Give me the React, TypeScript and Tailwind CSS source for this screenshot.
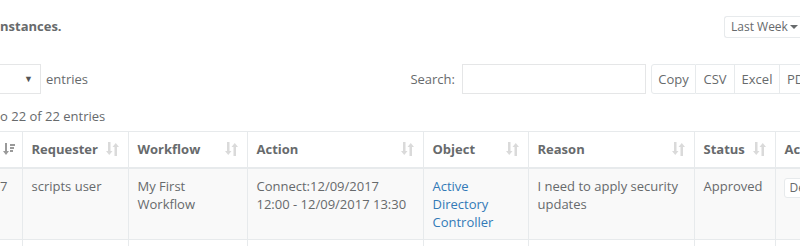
import React from "react";

/** Two thin arrows, used by every column that can be sorted */
function SortIcon({ active = false }: { active?: boolean }) {
  if (active) {
    return (
      <svg width="12" height="13" viewBox="0 0 12 13" className="shrink-0">
        <g fill="#9a9a9a">
          <rect x="2" y="0" width="2" height="9" />
          <polygon points="0,8 6,8 3,12" />
          <rect x="7" y="1" width="5" height="2" />
          <rect x="7" y="4" width="4" height="2" />
          <rect x="7" y="7" width="3" height="2" />
        </g>
      </svg>
    );
  }
  return (
    <svg width="13" height="14" viewBox="0 0 13 14" className="shrink-0">
      <g fill="#dadada">
        <rect x="2" y="0" width="2.5" height="10" />
        <polygon points="0,9 6.5,9 3.25,13" />
        <rect x="8.5" y="4" width="2.5" height="10" />
        <polygon points="6.5,5 13,5 9.75,1" />
      </g>
    </svg>
  );
}

interface Column {
  label: string;
  width: string;
  sortable: boolean;
  active?: boolean;
}

const COLUMNS: Column[] = [
  { label: "", width: "w-[22px]", sortable: true, active: true },
  { label: "Requester", width: "w-[106px]", sortable: true },
  { label: "Workflow", width: "w-[119px]", sortable: true },
  { label: "Action", width: "w-[176px]", sortable: true },
  { label: "Object", width: "w-[105px]", sortable: true },
  { label: "Reason", width: "w-[166px]", sortable: true },
  { label: "Status", width: "w-[81px]", sortable: true },
  { label: "Ac", width: "w-[80px]", sortable: false },
];

export default function App() {
  return (
    <div className="w-[800px] h-[246px] overflow-hidden bg-white font-['Open_Sans',sans-serif] text-[13px] leading-[18px] text-[#676a6c]">
      {/* title + range picker */}
      <div className="flex justify-between items-start pt-[16px] h-[38px]">
        <div className="mt-[1px] font-bold">nstances.</div>
        <div className="flex items-center h-[22px] w-[90px] pl-[6px] border border-[#e7eaec] border-r-0 rounded-l-[3px] text-[12px] text-[#676a6c] -mr-[14px]">
          Last Week
          <span className="ml-[2px] inline-block w-0 h-0 border-l-[4px] border-r-[4px] border-t-[4px] border-l-transparent border-r-transparent border-t-[#676a6c]" />
        </div>
      </div>

      {/* length / search / export */}
      <div className="flex items-center mt-[26px] h-[30px]">
        <div className="flex items-center justify-end h-[30px] w-[41px] border border-l-0 border-[#e5e6e7] pr-[7px]">
          <span className="text-[9px] text-[#555]">▼</span>
        </div>
        <span className="ml-[5px]">entries</span>
        <div className="flex-1" />
        <span>Search:</span>
        <div className="ml-[7px] h-[30px] w-[184px] border border-[#e5e6e7]" />
        <div className="ml-[5px] flex h-[30px] -mr-[40px]">
          <div className="w-[45px] flex items-center justify-center border border-[#e7eaec] rounded-l-[3px]">Copy</div>
          <div className="w-[39px] flex items-center justify-center border border-l-0 border-[#e7eaec]">CSV</div>
          <div className="w-[45px] flex items-center justify-center border border-l-0 border-[#e7eaec]">Excel</div>
          <div className="w-[60px] flex items-center pl-[7px] border border-l-0 border-[#e7eaec]">PDF</div>
        </div>
      </div>

      <div className="mt-[13px]">o 22 of 22 entries</div>

      {/* requests table */}
      <table className="mt-[6px] table-fixed border-collapse w-[855px]">
        <thead>
          <tr>
            {COLUMNS.map((col, i) => (
              <th
                key={i}
                className={`${col.width} h-[36px] border-t border-r border-b-2 border-[#e7eaec] px-[9px] text-left font-bold align-middle ${i === 0 ? "pl-[3px]" : ""}`}
              >
                <div className="flex items-center justify-between">
                  <span>{col.label}</span>
                  {col.sortable && <SortIcon active={col.active} />}
                </div>
              </th>
            ))}
          </tr>
        </thead>
        <tbody>
          <tr className="bg-[#f9f9f9] align-top">
            <td className="border-r border-b border-[#e7eaec] h-[71px] py-[8px] pr-[8px]">7</td>
            <td className="border-r border-b border-[#e7eaec] py-[8px] px-[9px]">scripts user</td>
            <td className="border-r border-b border-[#e7eaec] py-[8px] px-[9px]">My First Workflow</td>
            <td className="border-r border-b border-[#e7eaec] py-[8px] px-[9px]">
              Connect:12/09/2017 12:00 - 12/09/2017 13:30
            </td>
            <td className="border-r border-b border-[#e7eaec] py-[8px] px-[9px]">
              <span className="text-[#337ab7]">Active Directory Controller</span>
            </td>
            <td className="border-r border-b border-[#e7eaec] py-[8px] px-[9px]">I need to apply security updates</td>
            <td className="border-r border-b border-[#e7eaec] py-[8px] px-[9px]">Approved</td>
            <td className="border-b border-[#e7eaec] py-[8px] px-[8px]">
              <span className="inline-block mt-[1px] px-[5px] h-[20px] leading-[18px] text-[12px] bg-white border border-[#e7eaec] rounded-[3px]">
                Deny
              </span>
            </td>
          </tr>
          <tr>
            {COLUMNS.map((_, i) => (
              <td key={i} className={`h-[30px] ${i < COLUMNS.length - 1 ? "border-r" : ""} border-[#e7eaec]`} />
            ))}
          </tr>
        </tbody>
      </table>
    </div>
  );
}
